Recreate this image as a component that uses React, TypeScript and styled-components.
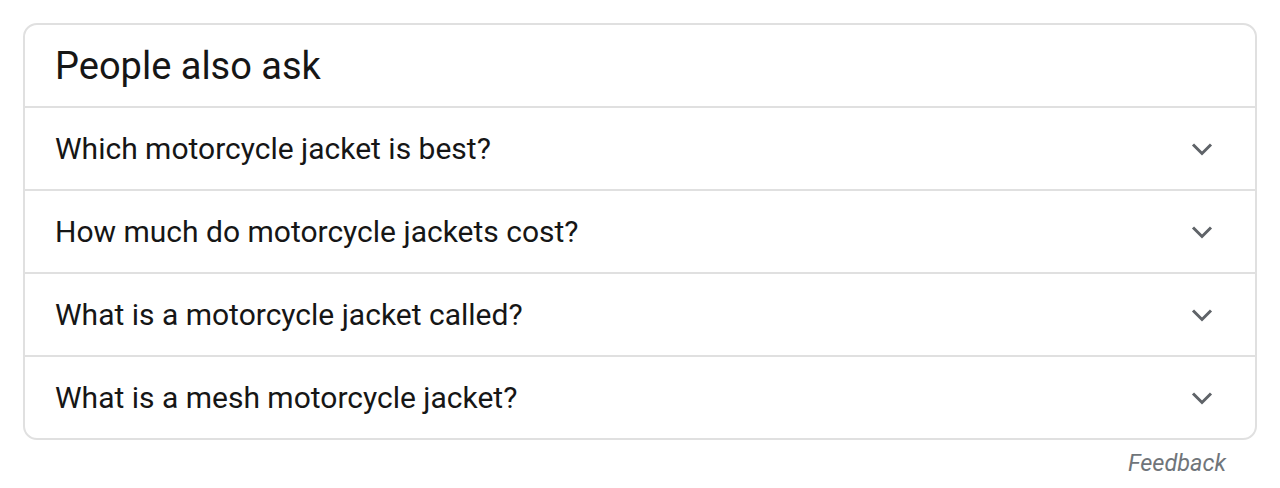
import React from 'react';
import styled, { createGlobalStyle } from 'styled-components';

const GlobalStyle = createGlobalStyle`
  body {
    margin: 0;
    background: #ffffff;
    font-family: Roboto, "Liberation Sans", Arial, sans-serif;
  }
`;

const Page = styled.div`
  padding: 23px 23px 0 23px;
`;

const Card = styled.div`
  border: 2px solid #e0e0e0;
  border-radius: 14px;
  overflow: hidden;
`;

const Header = styled.div`
  height: 81px;
  display: flex;
  align-items: center;
  padding: 0 30px;
  font-size: 38px;
  color: #161616;
`;

const Row = styled.div`
  height: 81px;
  border-top: 2px solid #e0e0e0;
  display: flex;
  align-items: center;
  justify-content: space-between;
  padding: 0 42px 0 30px;
  font-size: 30px;
  color: #161616;
`;

const Chevron = styled.svg`
  width: 22px;
  height: 14px;
  flex-shrink: 0;
`;

const Footer = styled.div`
  display: flex;
  justify-content: flex-end;
  padding: 9px 31px 0 0;
`;

const FeedbackLink = styled.span`
  font-size: 23.5px;
  font-style: italic;
  color: #70757a;
`;

const questions = [
  'Which motorcycle jacket is best?',
  'How much do motorcycle jackets cost?',
  'What is a motorcycle jacket called?',
  'What is a mesh motorcycle jacket?',
];

const App: React.FC = () => {
  return (
    <>
      <GlobalStyle />
      <Page>
        <Card>
          <Header>People also ask</Header>
          {questions.map((q) => (
            <Row key={q}>
              <span>{q}</span>
              <Chevron viewBox="0 0 22 14">
                <path d="M2 2.5 L11 11.5 L20 2.5" fill="none" stroke="#5f6368" strokeWidth="3" />
              </Chevron>
            </Row>
          ))}
        </Card>
        <Footer>
          <FeedbackLink>Feedback</FeedbackLink>
        </Footer>
      </Page>
    </>
  );
};

export default App;
